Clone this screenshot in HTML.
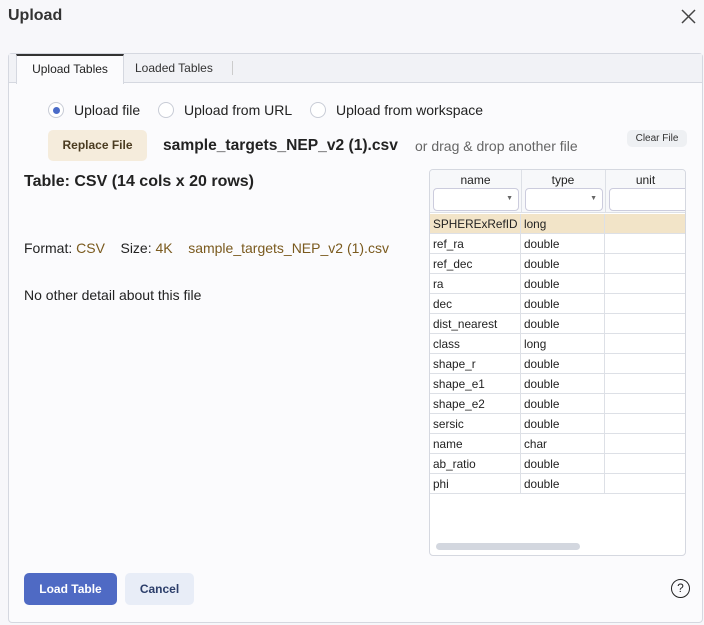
<!DOCTYPE html>
<html><head><style>
*{box-sizing:border-box;margin:0;padding:0}
body{width:704px;height:625px;background:#f7f7fa;font-family:"Liberation Sans",sans-serif;color:#222;position:relative;overflow:hidden;font-size:13px}
.a{position:absolute;white-space:nowrap}
.panel{position:absolute;left:8px;top:53px;width:695px;height:570px;border:1px solid #d5d8e0;border-radius:4px;background:#fbfbfd}
.tabs{position:absolute;left:0;top:0;width:100%;height:29px;background:#f1f2f6;border-bottom:1px solid #d5d8e0}
.radio{position:absolute;width:16px;height:16px;border:1px solid #c8ccd6;border-radius:50%;background:#fff}
.tbl{position:absolute;left:429px;top:169px;width:257px;height:387px;border:1px solid #d5d8e0;border-radius:4px;background:#fff;overflow:hidden}
.row{position:absolute;left:0;height:20px;width:256px;border-bottom:1px solid #dde0e6;font-size:11.8px;line-height:20px}
.row span{position:absolute;top:0;height:20px;padding-left:3px;border-right:1px solid #dde0e6;overflow:hidden}
.c1{left:0;width:91px}.c2{left:91px;width:84px}.c3{left:175px;width:81px}
.brown{color:#7a5a1e}
</style></head><body>
<div class="a" style="left:8px;top:7px;font-size:16px;font-weight:bold;color:#333">Upload</div>
<svg class="a" style="left:681px;top:9px" width="15" height="15"><path d="M1 1L14 14M14 1L1 14" stroke="#444" stroke-width="1.5"/></svg>
<div class="panel">
 <div class="tabs">
  <div class="a" style="left:7px;top:0;width:108px;height:30px;background:#fbfbfd;border-top:2px solid #333;border-right:1px solid #d5d8e0;border-left:1px solid #d5d8e0;font-size:12px;text-align:center;line-height:26px">Upload Tables</div>
  <div class="a" style="left:126px;top:7px;font-size:12px;color:#333">Loaded Tables</div>
  <div class="a" style="left:223px;top:7px;width:1px;height:14px;background:#ccc"></div>
 </div>
</div>
<div class="radio" style="left:48px;top:102px;"></div><div class="a" style="left:53px;top:107px;width:7px;height:7px;border-radius:50%;background:#4a6bc8"></div>
<div class="a" style="left:74px;top:102px;font-size:14px">Upload file</div>
<div class="radio" style="left:158px;top:102px"></div>
<div class="a" style="left:184px;top:102px;font-size:14px">Upload from URL</div>
<div class="radio" style="left:310px;top:102px"></div>
<div class="a" style="left:336px;top:102px;font-size:14px">Upload from workspace</div>
<div class="a" style="left:48px;top:130px;width:99px;height:31px;background:#f5ecdc;border-radius:5px;font-size:12px;font-weight:bold;color:#4a3b20;text-align:center;line-height:31px">Replace File</div>
<div class="a" style="left:163px;top:137px;font-size:15.6px;font-weight:bold">sample_targets_NEP_v2 (1).csv</div>
<div class="a" style="left:415px;top:138px;font-size:14px;color:#666">or drag &amp; drop another file</div>
<div class="a" style="left:627px;top:130px;width:60px;height:17px;background:#eef0f3;border-radius:5px;font-size:10px;text-align:center;line-height:17px;color:#333">Clear File</div>
<div class="a" style="left:24px;top:173px;font-size:16px;font-weight:bold">Table: CSV (14 cols x 20 rows)</div>
<div class="a" style="left:24px;top:240px;font-size:14px">Format: <span class="brown">CSV</span>&nbsp;&nbsp;&nbsp; Size: <span class="brown">4K</span>&nbsp;&nbsp;&nbsp; <span class="brown">sample_targets_NEP_v2 (1).csv</span></div>
<div class="a" style="left:24px;top:287px;font-size:14px">No other detail about this file</div>
<div class="tbl">
 <div class="a" style="left:0;top:0;width:256px;height:43px;border-bottom:1px solid #dde0e6;background:#f7f8fa"></div>
 <div class="a" style="left:91px;top:0;width:1px;height:43px;background:#dde0e6"></div>
 <div class="a" style="left:175px;top:0;width:1px;height:43px;background:#dde0e6"></div>
 <div class="a" style="left:0;top:3px;width:91px;text-align:center;font-size:12px">name</div>
 <div class="a" style="left:91px;top:3px;width:84px;text-align:center;font-size:12px">type</div>
 <div class="a" style="left:175px;top:3px;width:81px;text-align:center;font-size:12px">unit</div>
 <div class="a" style="left:3px;top:18px;width:86px;height:23px;border:1px solid #ccd;border-radius:4px;background:#fff"><span class="a" style="right:5px;top:6px;font-size:7px;color:#666">▼</span></div>
 <div class="a" style="left:95px;top:18px;width:78px;height:23px;border:1px solid #ccd;border-radius:4px;background:#fff"><span class="a" style="right:5px;top:6px;font-size:7px;color:#666">▼</span></div>
 <div class="a" style="left:179px;top:18px;width:80px;height:23px;border:1px solid #ccd;border-radius:4px;background:#fff"></div>
 <div class="row" style="top:44px;background:#f2e4c8"><span class="c1">SPHERExRefID</span><span class="c2">long</span><span class="c3"></span></div>
 <div class="row" style="top:64px"><span class="c1">ref_ra</span><span class="c2">double</span><span class="c3"></span></div>
 <div class="row" style="top:84px"><span class="c1">ref_dec</span><span class="c2">double</span><span class="c3"></span></div>
 <div class="row" style="top:104px"><span class="c1">ra</span><span class="c2">double</span><span class="c3"></span></div>
 <div class="row" style="top:124px"><span class="c1">dec</span><span class="c2">double</span><span class="c3"></span></div>
 <div class="row" style="top:144px"><span class="c1">dist_nearest</span><span class="c2">double</span><span class="c3"></span></div>
 <div class="row" style="top:164px"><span class="c1">class</span><span class="c2">long</span><span class="c3"></span></div>
 <div class="row" style="top:184px"><span class="c1">shape_r</span><span class="c2">double</span><span class="c3"></span></div>
 <div class="row" style="top:204px"><span class="c1">shape_e1</span><span class="c2">double</span><span class="c3"></span></div>
 <div class="row" style="top:224px"><span class="c1">shape_e2</span><span class="c2">double</span><span class="c3"></span></div>
 <div class="row" style="top:244px"><span class="c1">sersic</span><span class="c2">double</span><span class="c3"></span></div>
 <div class="row" style="top:264px"><span class="c1">name</span><span class="c2">char</span><span class="c3"></span></div>
 <div class="row" style="top:284px"><span class="c1">ab_ratio</span><span class="c2">double</span><span class="c3"></span></div>
 <div class="row" style="top:304px"><span class="c1">phi</span><span class="c2">double</span><span class="c3"></span></div>
 <div class="a" style="left:6px;top:373px;width:144px;height:7px;border-radius:4px;background:#d3d7df"></div>
</div>
<div class="a" style="left:24px;top:573px;width:93px;height:32px;background:#4f6ac4;border-radius:5px;color:#fff;font-size:12px;font-weight:bold;text-align:center;line-height:32px">Load Table</div>
<div class="a" style="left:125px;top:573px;width:69px;height:32px;background:#e8edf7;border-radius:5px;color:#2c3e6a;font-size:12px;font-weight:bold;text-align:center;line-height:32px">Cancel</div>
<div class="a" style="left:671px;top:579px;width:19px;height:19px;border:1.3px solid #222;border-radius:50%;font-size:12px;font-weight:normal;text-align:center;line-height:17px">?</div>
</body></html>
